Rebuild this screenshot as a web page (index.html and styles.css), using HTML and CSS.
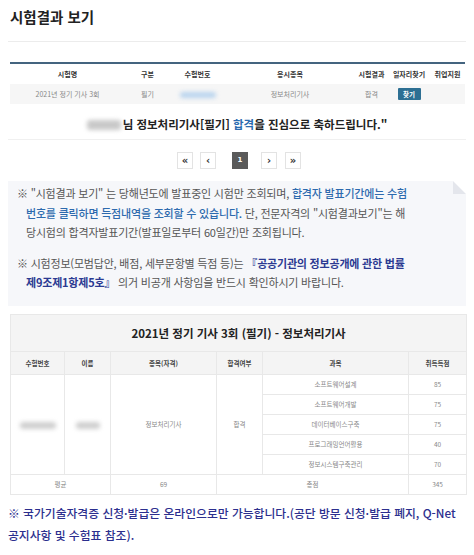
FILE: index.html
```html
<!DOCTYPE html>
<html lang="ko">
<head>
<meta charset="utf-8">
<link rel="stylesheet" href="styles.css">
</head>
<body>
<div class="page">
  <h1 class="title">시험결과 보기</h1>
  <div class="rule"></div>

  <table class="t1">
    <colgroup>
      <col class="c1"><col class="c2"><col class="c3"><col class="c4"><col class="c5"><col class="c6"><col class="c7">
    </colgroup>
    <thead>
      <tr><th>시험명</th><th>구분</th><th>수험번호</th><th>응시종목</th><th>시험결과</th><th>일자리찾기</th><th>취업지원</th></tr>
    </thead>
    <tbody>
      <tr>
        <td>2021년 정기 기사 3회</td>
        <td>필기</td>
        <td><span class="blur blue"></span></td>
        <td>정보처리기사</td>
        <td>합격</td>
        <td><span class="btn">찾기</span></td>
        <td></td>
      </tr>
    </tbody>
  </table>

  <p class="congrats"><span class="blur name"></span>님 정보처리기사[필기] <span class="hl">합격</span>을 진심으로 축하드립니다."</p>
  <div class="rule rule2"></div>

  <nav class="pager">
    <span class="pg first">«</span>
    <span class="pg prev">‹</span>
    <span class="pg cur">1</span>
    <span class="pg next">›</span>
    <span class="pg last">»</span>
  </nav>

  <div class="notice">
    <p class="nline">※ "시험결과 보기" 는 당해년도에 발표중인 시험만 조회되며, <span class="nb">합격자 발표기간에는 수험<br>번호를 클릭하면 득점내역을 조회할 수 있습니다.</span> 단, 전문자격의 "시험결과보기"는 해<br>당시험의 합격자발표기간(발표일로부터 60일간)만 조회됩니다.</p>
    <p class="nline">※ 시험정보(모범답안, 배점, 세부문항별 득점 등)는 <span class="nlaw">『공공기관의 정보공개에 관한 법률<br>제9조제1항제5호』</span> 의거 비공개 사항임을 반드시 확인하시기 바랍니다.</p>
  </div>

  <table class="t2">
    <colgroup>
      <col class="d1"><col class="d2"><col class="d3"><col class="d4"><col class="d5"><col class="d6">
    </colgroup>
    <thead>
      <tr><th colspan="6" class="cap">2021년 정기 기사 3회 (필기) - 정보처리기사</th></tr>
      <tr class="hd"><th>수험번호</th><th>이름</th><th>종목(자격)</th><th>합격여부</th><th>과목</th><th>취득득점</th></tr>
    </thead>
    <tbody>
      <tr>
        <td rowspan="5"><span class="blur gray wide"></span></td>
        <td rowspan="5"><span class="blur gray short"></span></td>
        <td rowspan="5">정보처리기사</td>
        <td rowspan="5">합격</td>
        <td>소프트웨어설계</td><td>85</td>
      </tr>
      <tr><td>소프트웨어개발</td><td>75</td></tr>
      <tr><td>데이터베이스구축</td><td>75</td></tr>
      <tr><td>프로그래밍언어활용</td><td>40</td></tr>
      <tr><td>정보시스템구축관리</td><td>70</td></tr>
      <tr><td colspan="2">평균</td><td>69</td><td colspan="2">총점</td><td>345</td></tr>
    </tbody>
  </table>

  <p class="foot">※ 국가기술자격증 신청·발급은 온라인으로만 가능합니다.(공단 방문 신청·발급 폐지, Q-Net<br>공지사항 및 수험표 참조).</p>
</div>
</body>
</html>
```

FILE: styles.css
```css
* { box-sizing: border-box; }
html, body { margin: 0; padding: 0; background: #fff; }
body {
  font-family: "Noto Sans CJK KR", "Noto Sans", sans-serif;
  color: #333;
}
.page { padding: 0 8px; }

.title {
  margin: 0;
  padding-top: 6px;
  height: 41px;
  font-size: 14.5px;
  font-weight: 700;
  color: #222;
  line-height: 22px;
  padding-left: 2px;
}
.rule { height: 1px; background: #ececec; }

.t1 {
  width: 455px;
  margin: 20px 0 0 2px;
  border-collapse: collapse;
  table-layout: fixed;
  border-top: 2px solid #44647f;
}
.t1 .c1 { width: 115px; }
.t1 .c2 { width: 45px; }
.t1 .c3 { width: 55px; }
.t1 .c4 { width: 130px; }
.t1 .c5 { width: 33px; }
.t1 .c6 { width: 42px; }
.t1 .c7 { width: 35px; }
.t1 th, .t1 td {
  text-align: center;
  padding: 0;
  font-size: 7px;
  white-space: nowrap;
}
.t1 th { height: 21px; font-weight: 700; color: #333; }
.t1 td { height: 20px; background: #f6f6f6; color: #888; }
.blur { display: inline-block; vertical-align: middle; filter: blur(2px); border-radius: 3px; }
.blur.blue { width: 36px; height: 6px; background: #b9d4ee; }
.btn {
  display: inline-block;
  width: 23px;
  height: 12px;
  line-height: 12px;
  background: #2d6f93;
  color: #fff;
  font-size: 6.5px;
  font-weight: 700;
  border-radius: 1px;
  vertical-align: middle;
}

.congrats {
  margin: 12px 0 0;
  height: 23px;
  text-align: center;
  font-size: 11.5px;
  font-weight: 700;
  color: #222;
  line-height: 16px;
}
.congrats .hl { color: #2a6bb0; }
.blur.name { width: 34px; height: 10px; background: #c9c9c9; margin-right: 2px; vertical-align: -1px; }
.rule2 { background: #f0f0f0; }

.pager {
  display: flex;
  justify-content: center;
  align-items: center;
  margin-top: 11px;
  height: 18px;
  padding-left: 4px;
}
.pg {
  width: 16px;
  height: 17px;
  border: 1px solid #e3e3e3;
  display: flex;
  align-items: center;
  justify-content: center;
  font-size: 10px;
  font-weight: 700;
  color: #333;
  font-family: "DejaVu Sans", sans-serif;
}
.pg.prev { margin-left: 7px; }
.pg.cur { margin-left: 16px; background: #5a5a5a; border-color: #5a5a5a; color: #fff; font-size: 7px; }
.pg.next { margin-left: 13px; }
.pg.last { margin-left: 8px; }

.notice {
  position: relative;
  margin-top: 12px;
  background: #f6f7fa;
  padding: 3px 12px 13px 9px;
}
.notice::before {
  content: "";
  position: absolute;
  top: 0;
  right: 0;
  width: 0;
  height: 0;
  border-style: solid;
  border-width: 0 13px 13px 0;
  border-color: #fff #fff #e4e6ec #e4e6ec;
}
.nline {
  margin: 0 0 11px;
  font-size: 11px;
  line-height: 19.5px;
  color: #555;
  padding-left: 9px;
  text-indent: -9px;
  white-space: nowrap;
  letter-spacing: -0.2px;
}
.nline:last-child { margin-bottom: 0; }
.nb { color: #2d6aae; font-weight: 500; }
.nlaw { color: #2b3a92; font-weight: 700; }

.t2 {
  width: 456px;
  margin: 8px 0 0 2px;
  border-collapse: collapse;
  table-layout: fixed;
}
.t2 .d1 { width: 54px; }
.t2 .d2 { width: 46px; }
.t2 .d3 { width: 106px; }
.t2 .d4 { width: 46px; }
.t2 .d5 { width: 146px; }
.t2 .d6 { width: 58px; }
.t2 th, .t2 td {
  border: 1px solid #e8e8e8;
  text-align: center;
  padding: 0;
  white-space: nowrap;
}
.t2 .cap {
  height: 37px;
  background: #f4f4f4;
  font-size: 11.5px;
  font-weight: 700;
  color: #222;
}
.t2 .hd th {
  height: 23px;
  background: #f4f4f4;
  font-size: 6.5px;
  font-weight: 700;
  color: #444;
}
.t2 td {
  height: 20px;
  font-size: 6.5px;
  color: #888;
}
.blur.gray { background: #cfcfcf; height: 7px; }
.blur.wide { width: 36px; }
.blur.short { width: 24px; }

.foot {
  margin: 7px 0 0;
  font-size: 11.8px;
  line-height: 22px;
  color: #2c2f8e;
  font-weight: 500;
  white-space: nowrap;
}
```
